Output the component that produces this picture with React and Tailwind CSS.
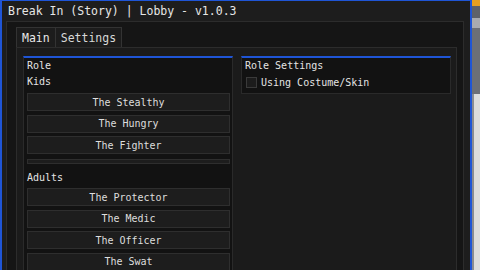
import React from 'react';

const kids = ['The Stealthy', 'The Hungry', 'The Fighter'];
const adults = ['The Protector', 'The Medic', 'The Officer', 'The Swat'];

function RoleButton({ label }) {
  return (
    <div className="flex h-[18px] shrink-0 items-center justify-center border border-[#2e2e2e] bg-[#1d1d1d] text-[10px] text-[#dedede]">
      {label}
    </div>
  );
}

function Section({ children, className = '' }) {
  return (
    <div className={`flex flex-col border-x border-b border-t-2 border-[#2a2a2a] border-t-[#1f55d6] bg-[#121212] pl-[3px] pr-[2px] ${className}`}>
      {children}
    </div>
  );
}

export default function App() {
  return (
    <div className="flex h-[270px] w-[480px] overflow-hidden bg-[#6b6e76] font-['DejaVu_Sans_Mono',monospace] text-[#e4e4e4]">
      <div className="flex w-[472px] shrink-0 flex-col border-x-2 border-t border-[#1f55d6] bg-[#1d1d1d]">
        <div className="h-[20px] shrink-0 pl-[6px] text-[11.5px] leading-[21px] text-[#e6e6e6]">
          Break In (Story) | Lobby - v1.0.3
        </div>

        <div className="ml-[4px] mr-[6px] flex flex-1 flex-col border border-[#2c2c2c] bg-[#151515] pl-[9px] pr-[6px] pt-[5px]">
          <div className="flex text-[11.5px]">
            <div className="h-[20px] border-x border-t border-[#333] bg-[#1c1c1c] px-[5px] leading-[20px] text-[#e8e8e8]">Main</div>
            <div className="h-[20px] border-r border-t border-[#333] bg-[#1c1c1c] px-[5px] leading-[20px] text-[#d8d8d8]">Settings</div>
          </div>

          <div className="grid flex-1 grid-cols-2 items-start gap-[8px] border border-[#2c2c2c] bg-[#1b1b1b] pl-[6px] pr-[5px] pt-[8px]">
            <Section className="pb-[4px]">
              <div className="h-[16px] text-[10px] leading-[16px]">Role</div>
              <div className="h-[16px] text-[10px] leading-[16px]">Kids</div>
              <div className="mt-[3px] flex flex-col gap-[3.5px]">
                {kids.map((k) => (
                  <RoleButton key={k} label={k} />
                ))}
              </div>
              <div className="mt-[5px] h-[5px] border border-[#2e2e2e] bg-[#1d1d1d]" />
              <div className="mt-[5.5px] h-[16px] text-[10px] leading-[16px]">Adults</div>
              <div className="mt-[2.5px] flex flex-col gap-[3.5px]">
                {adults.map((a) => (
                  <RoleButton key={a} label={a} />
                ))}
              </div>
            </Section>

            <Section className="pb-[3px]">
              <div className="h-[16px] text-[10px] leading-[16px]">Role Settings</div>
              <div className="flex h-[16px] items-center gap-[4px] pl-[1px] text-[10px]">
                <div className="h-[11px] w-[11px] border border-[#3a3a3a] bg-[#1c1c1c]" />
                <span>Using Costume/Skin</span>
              </div>
            </Section>
          </div>
        </div>
      </div>

      <div className="flex flex-1 flex-col">
        <div className="h-[6px] bg-[#e8a020]" />
        <div className="h-[12px] bg-[#5e6169]" />
        <div className="h-[10px] bg-[#a8aab0]" />
        <div className="h-[66px] bg-[#6c6f77]" />
        <div className="flex flex-1">
          <div className="w-[2px] bg-[#8a8c92]" />
          <div className="flex-1 bg-[#dcdcdc]" />
        </div>
      </div>
    </div>
  );
}
